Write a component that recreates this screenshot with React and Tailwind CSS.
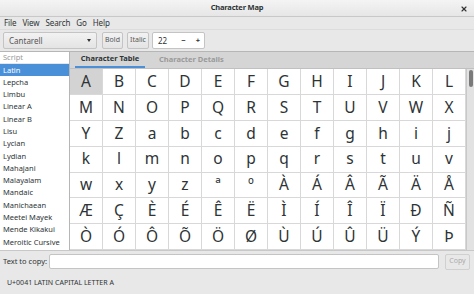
import React from 'react';
import { X } from 'lucide-react';

const scripts = [
  'Latin', 'Lepcha', 'Limbu', 'Linear A', 'Linear B', 'Lisu', 'Lycian', 'Lydian',
  'Mahajani', 'Malayalam', 'Mandaic', 'Manichaean', 'Meetei Mayek', 'Mende Kikakui', 'Meroitic Cursive',
];

const chars = [
  'A', 'B', 'C', 'D', 'E', 'F', 'G', 'H', 'I', 'J', 'K', 'L',
  'M', 'N', 'O', 'P', 'Q', 'R', 'S', 'T', 'U', 'V', 'W', 'X',
  'Y', 'Z', 'a', 'b', 'c', 'd', 'e', 'f', 'g', 'h', 'i', 'j',
  'k', 'l', 'm', 'n', 'o', 'p', 'q', 'r', 's', 't', 'u', 'v',
  'w', 'x', 'y', 'z', 'ª', 'º', 'À', 'Á', 'Â', 'Ã', 'Ä', 'Å',
  'Æ', 'Ç', 'È', 'É', 'Ê', 'Ë', 'Ì', 'Í', 'Î', 'Ï', 'Ð', 'Ñ',
  'Ò', 'Ó', 'Ô', 'Õ', 'Ö', 'Ø', 'Ù', 'Ú', 'Û', 'Ü', 'Ý', 'Þ',
];

const App = () => {
  return (
    <div className="w-[474px] h-[294px] overflow-hidden bg-[#e8e8e8] flex flex-col text-[#2e3436] font-['Noto_Sans',sans-serif]">
      {/* title bar */}
      <div className="h-[17px] shrink-0 relative flex items-center justify-center bg-gradient-to-b from-[#f4f4f4] to-[#e6e6e6] border-b border-[#c8c8c8]">
        <span className="text-[7.5px] font-bold tracking-[-0.2px]">Character Map</span>
        <X size={8} strokeWidth={3.5} className="absolute right-[6px] top-[5px] text-[#333]" />
      </div>

      {/* menu */}
      <div className="h-[13px] shrink-0 flex items-center px-[4px] text-[8px] tracking-[-0.1px] border-b border-[#dcdcdc]">
        <span>File</span>
        <span className="ml-[6px]">View</span>
        <span className="ml-[6px]">Search</span>
        <span className="ml-[6px]">Go</span>
        <span className="ml-[6px]">Help</span>
      </div>

      {/* toolbar */}
      <div className="h-[22px] shrink-0 flex items-center px-[3px] text-[7.5px] border-b border-[#b6b6b6]">
        <div className="w-[94px] h-[17px] flex items-center justify-between px-[5px] rounded-[2px] border border-[#c4c4c4] bg-gradient-to-b from-[#f2f2f2] to-[#e4e4e4]">
          <span className="text-[#555] text-[8px]">Cantarell</span>
          <span className="w-0 h-0 border-l-[2.5px] border-r-[2.5px] border-t-[3px] border-l-transparent border-r-transparent border-t-[#333]" />
        </div>
        <div className="ml-[5px] w-[21px] h-[17px] flex items-center justify-center rounded-[2px] border border-[#c4c4c4] bg-gradient-to-b from-[#f2f2f2] to-[#e4e4e4] text-[#555] text-[7px]">Bold</div>
        <div className="ml-[4px] w-[22px] h-[17px] flex items-center justify-center rounded-[2px] border border-[#c4c4c4] bg-gradient-to-b from-[#f2f2f2] to-[#e4e4e4] text-[#555] text-[7px]">Italic</div>
        <div className="ml-[3px] w-[53px] h-[17px] flex items-center rounded-[2px] border border-[#c4c4c4] bg-white">
          <span className="pl-[5px] w-[22px] text-[8px]">22</span>
          <span className="w-[17px] text-center font-bold">−</span>
          <span className="w-[12px] text-center font-bold">+</span>
        </div>
      </div>

      {/* main */}
      <div className="h-[198px] shrink-0 flex">
        <div className="w-[70px] shrink-0 bg-white border-r border-[#b6b6b6] text-[7.5px] overflow-hidden">
          <div className="h-[12px] flex items-center px-[3px] text-[#999] border-b border-[#e6e6e6]">Script</div>
          {scripts.map((s, i) => (
            <div
              key={s}
              className={`h-[12.3px] flex items-center px-[3px] whitespace-nowrap ${i === 0 ? 'bg-[#4a90d9] text-white' : ''}`}
            >
              {s}
            </div>
          ))}
        </div>

        <div className="flex-1 flex flex-col">
          <div className="h-[17px] shrink-0 flex items-end bg-[#d5d5d5] border-b border-[#c0c0c0] text-[7.5px] font-bold">
            <div className="ml-[5px] w-[70px] h-[16px] flex items-center justify-center border-b-2 border-[#4a90d9] text-[#2e3436]">Character Table</div>
            <div className="ml-[14px] h-[16px] flex items-center text-[#9a9a9a]">Character Details</div>
          </div>
          <div className="flex-1 flex overflow-hidden">
            <div className="w-[396px] h-[181px] grid grid-cols-[repeat(12,32px)] grid-rows-[repeat(7,24.9px)] gap-px bg-[#d8d8d8] overflow-hidden">
              {chars.map((c, i) => (
                <div
                  key={i}
                  className={`flex items-center justify-center text-[15.5px] ${i === 0 ? 'bg-[#d3d3d3]' : 'bg-white'}`}
                >
                  {c}
                </div>
              ))}
            </div>
            <div className="flex-1 bg-[#e2e2e2] border-l border-[#c8c8c8] relative">
              <div className="absolute left-[2px] top-[1px] w-[4px] h-[17px] rounded-full bg-[#7a7a7a]" />
            </div>
          </div>
        </div>
      </div>

      {/* text to copy */}
      <div className="h-[22px] shrink-0 flex items-center px-[3px] text-[7.5px] border-t border-[#c8c8c8]">
        <span className="whitespace-nowrap w-[46px] shrink-0">Text to copy:</span>
        <div className="w-[390px] h-[15px] shrink-0 rounded-[2px] border border-[#c4c4c4] bg-white" />
        <div className="ml-[6px] w-[25px] h-[16px] shrink-0 flex items-center justify-center rounded-[2px] border border-[#d0d0d0] text-[#aaa] text-[7px]">Copy</div>
      </div>

      {/* status */}
      <div className="flex-1 flex items-center px-[7px] text-[7px]">
        U+0041 LATIN CAPITAL LETTER A
      </div>
    </div>
  );
};

export default App;
